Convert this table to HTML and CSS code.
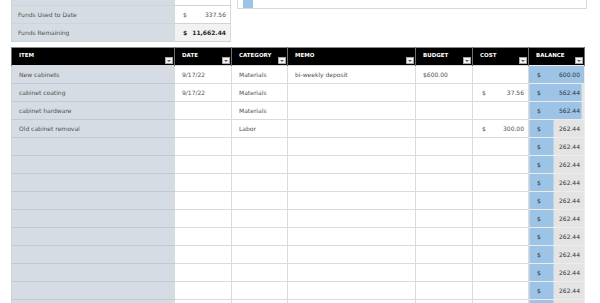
FILE: index.html
```html
<!DOCTYPE html>
<html>
<head>
<meta charset="utf-8">
<link rel="stylesheet" href="styles.css">
</head>
<body>
<div class="page">
  <div class="top">
    <div class="summary">
      <div class="srow partial"><div class="lbl"></div><div class="val"></div></div>
      <div class="srow"><div class="lbl">Funds Used to Date</div><div class="val"><span>$</span><span>337.56</span></div></div>
      <div class="srow total"><div class="lbl">Funds Remaining</div><div class="val"><span>$</span><span>11,662.44</span></div></div>
    </div>
    <div class="chart"><div class="chart-bar"></div></div>
  </div>

  <table class="ledger">
    <colgroup>
      <col class="c-item"><col class="c-date"><col class="c-cat"><col class="c-memo"><col class="c-budget"><col class="c-cost"><col class="c-bal">
    </colgroup>
    <thead>
      <tr>
        <th>ITEM<span class="filter"></span></th>
        <th>DATE<span class="filter"></span></th>
        <th>CATEGORY<span class="filter"></span></th>
        <th>MEMO<span class="filter"></span></th>
        <th>BUDGET<span class="filter"></span></th>
        <th>COST<span class="filter"></span></th>
        <th>BALANCE<span class="filter"></span></th>
      </tr>
    </thead>
    <tbody>
      <tr><td class="item">New cabinets</td><td>9/17/22</td><td>Materials</td><td>bi-weekly deposit</td><td>$600.00</td><td></td><td class="bal" style="--pct:100%"><div class="money"><span>$</span><span>600.00</span></div></td></tr>
      <tr><td class="item">cabinet coating</td><td>9/17/22</td><td>Materials</td><td></td><td></td><td><div class="money"><span>$</span><span>37.56</span></div></td><td class="bal" style="--pct:93.7%"><div class="money"><span>$</span><span>562.44</span></div></td></tr>
      <tr><td class="item">cabinet hardware</td><td></td><td>Materials</td><td></td><td></td><td></td><td class="bal" style="--pct:93.7%"><div class="money"><span>$</span><span>562.44</span></div></td></tr>
      <tr><td class="item">Old cabinet removal</td><td></td><td>Labor</td><td></td><td></td><td><div class="money"><span>$</span><span>300.00</span></div></td><td class="bal" style="--pct:43.7%"><div class="money"><span>$</span><span>262.44</span></div></td></tr>
      <tr><td class="item"></td><td></td><td></td><td></td><td></td><td></td><td class="bal" style="--pct:43.7%"><div class="money"><span>$</span><span>262.44</span></div></td></tr>
      <tr><td class="item"></td><td></td><td></td><td></td><td></td><td></td><td class="bal" style="--pct:43.7%"><div class="money"><span>$</span><span>262.44</span></div></td></tr>
      <tr><td class="item"></td><td></td><td></td><td></td><td></td><td></td><td class="bal" style="--pct:43.7%"><div class="money"><span>$</span><span>262.44</span></div></td></tr>
      <tr><td class="item"></td><td></td><td></td><td></td><td></td><td></td><td class="bal" style="--pct:43.7%"><div class="money"><span>$</span><span>262.44</span></div></td></tr>
      <tr><td class="item"></td><td></td><td></td><td></td><td></td><td></td><td class="bal" style="--pct:43.7%"><div class="money"><span>$</span><span>262.44</span></div></td></tr>
      <tr><td class="item"></td><td></td><td></td><td></td><td></td><td></td><td class="bal" style="--pct:43.7%"><div class="money"><span>$</span><span>262.44</span></div></td></tr>
      <tr><td class="item"></td><td></td><td></td><td></td><td></td><td></td><td class="bal" style="--pct:43.7%"><div class="money"><span>$</span><span>262.44</span></div></td></tr>
      <tr><td class="item"></td><td></td><td></td><td></td><td></td><td></td><td class="bal" style="--pct:43.7%"><div class="money"><span>$</span><span>262.44</span></div></td></tr>
      <tr><td class="item"></td><td></td><td></td><td></td><td></td><td></td><td class="bal" style="--pct:43.7%"><div class="money"><span>$</span><span>262.44</span></div></td></tr>
      <tr><td class="item"></td><td></td><td></td><td></td><td></td><td></td><td class="bal" style="--pct:43.7%"></td></tr>
    </tbody>
  </table>
</div>
</body>
</html>
```

FILE: styles.css
```css
* { box-sizing: border-box; }
html, body { margin: 0; padding: 0; background: #fff; }
body {
  font-family: "DejaVu Sans", "Liberation Sans", sans-serif;
  font-size: 6px;
  color: #505050;
  overflow: hidden;
  width: 600px;
  height: 303px;
}
.page { padding-left: 11px; }

.top { display: flex; align-items: flex-start; }
.summary { width: 220px; flex: none; }
.srow { display: flex; height: 18px; border-bottom: 1px solid #d0d3d8; }
.srow.partial { height: 6px; }
.lbl {
  width: 163px; background: #d6dce4; padding-left: 6px;
  display: flex; align-items: center;
  border-left: 1px solid #d0d3d8;
}
.val {
  width: 57px; background: #fff; display: flex; align-items: center;
  justify-content: space-between; padding: 0 4px 0 8px;
  border-left: 1px solid #d9d9d9; border-right: 1px solid #d9d9d9;
}
.srow.total .val { background: #f2f2f2; font-weight: bold; color: #262626; }

.chart {
  margin-left: 6px; width: 350px; height: 9px;
  border: 1px solid #d9d9d9; border-top: none;
  display: flex; align-items: flex-end; padding-left: 5px;
}
.chart-bar { width: 10px; height: 8px; background: #9dc3e6; }

.ledger {
  margin-top: 5px;
  border-collapse: collapse;
  table-layout: fixed;
  width: 573px;
}
.c-item { width: 163px; }
.c-date { width: 57px; }
.c-cat { width: 56px; }
.c-memo { width: 128px; }
.c-budget { width: 57px; }
.c-cost { width: 56px; }
.c-bal { width: 56px; }

.ledger th {
  position: relative;
  background: #000; color: #fff;
  font-size: 5.5px; font-weight: bold; text-align: left;
  height: 18px; padding: 0 0 4px 7px;
  border-left: 1px solid #6e6e6e; border-right: 1px solid #6e6e6e;
  border-top: 1px solid #8a8a8a;
  vertical-align: middle;
}
.filter {
  position: absolute; right: 1px; bottom: 1px;
  width: 8px; height: 7px;
  background: #f2f2f2; border: 1px solid #a6a6a6;
}
.filter::after {
  content: ""; position: absolute; left: 1px; top: 2px;
  border-left: 2.5px solid transparent; border-right: 2.5px solid transparent;
  border-top: 2.5px solid #595959;
}

.ledger td {
  height: 18px; padding: 0 4px 0 7px;
  border: 1px solid #dadada;
  white-space: nowrap; overflow: hidden;
  vertical-align: middle;
}
.ledger td.item {
  background: #d6dce4;
  border-bottom-color: #c4cad3; border-left-color: #d0d3d8;
  padding-left: 7px;
}
.money { display: flex; justify-content: space-between; padding-left: 2px; }
.ledger td.bal {
  padding: 0 4px 0 8px;
  background: linear-gradient(to right, #9dc3e6 var(--pct), #e4e4e4 var(--pct));
  border-color: #ececec;
}
.bal .money { padding-left: 0; color: #333; }
```
